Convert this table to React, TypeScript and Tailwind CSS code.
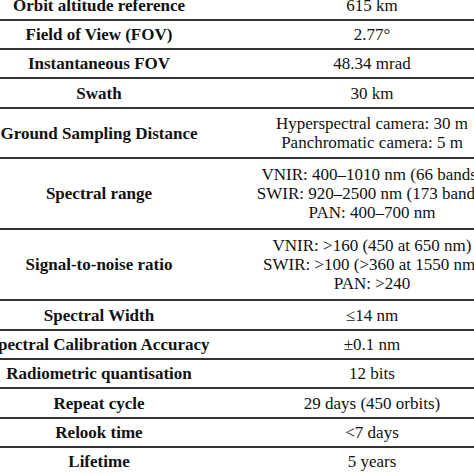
import React from "react";

type Row = { label: string; value: string[]; h: string };

const rows: Row[] = [
  { label: "Orbit altitude reference", value: ["615 km"], h: "h-[29px]" },
  { label: "Field of View (FOV)", value: ["2.77°"], h: "h-[29px]" },
  { label: "Instantaneous FOV", value: ["48.34 mrad"], h: "h-[29px]" },
  { label: "Swath", value: ["30 km"], h: "h-[30px]" },
  {
    label: "Ground Sampling Distance",
    value: ["Hyperspectral camera: 30 m", "Panchromatic camera: 5 m"],
    h: "h-[50px]",
  },
  {
    label: "Spectral range",
    value: ["VNIR: 400–1010 nm (66 bands)", "SWIR: 920–2500 nm (173 bands)", "PAN: 400–700 nm"],
    h: "h-[71px]",
  },
  {
    label: "Signal-to-noise ratio",
    value: ["VNIR: >160 (450 at 650 nm)", "SWIR: >100 (>360 at 1550 nm)", "PAN: >240"],
    h: "h-[71px]",
  },
  { label: "Spectral Width", value: ["≤14 nm"], h: "h-[30px]" },
  { label: "Spectral Calibration Accuracy", value: ["±0.1 nm"], h: "h-[29px]" },
  { label: "Radiometric quantisation", value: ["12 bits"], h: "h-[29px]" },
  { label: "Repeat cycle", value: ["29 days (450 orbits)"], h: "h-[30px]" },
  { label: "Relook time", value: ["<7 days"], h: "h-[29px]" },
  { label: "Lifetime", value: ["5 years"], h: "h-[29px]" },
];

export default function App() {
  return (
    <div className="w-[474px] h-[474px] overflow-hidden bg-white text-[#111]" style={{ fontFamily: '"Liberation Serif", "Times New Roman", serif' }}>
      <div className="ml-[-37px] mt-[-8px] w-[546px] flex flex-col">
        {rows.map((r, i) => (
          <div key={i} className={`flex items-center border-b-2 border-[#333333] ${r.h}`}>
            <div className="w-[272px] text-center font-bold text-[17px] leading-[19px] whitespace-nowrap">{r.label}</div>
            <div className="flex-1 flex flex-col items-center text-[17px] leading-[19px] whitespace-nowrap">
              {r.value.map((v, j) => (
                <div key={j}>{v}</div>
              ))}
            </div>
          </div>
        ))}
      </div>
    </div>
  );
}
